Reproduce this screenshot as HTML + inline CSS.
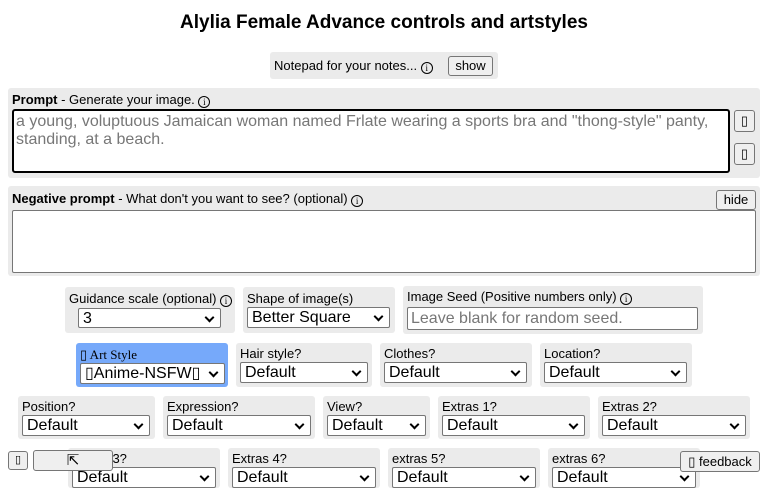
<!DOCTYPE html>
<html><head><meta charset="utf-8"><style>
*{box-sizing:border-box;margin:0;padding:0}
body{width:768px;height:480px;overflow:hidden;background:#fff;font-family:"Liberation Sans",Arial,sans-serif;color:#000;position:relative}
.a{position:absolute}
.box{position:absolute;background:#ebebeb;border-radius:3px}
.lbl{position:absolute;font-size:13px;white-space:nowrap;line-height:15px}
.i{display:inline-block;width:12px;height:12px;border:1.3px solid #000;border-radius:50%;font-size:9px;line-height:10px;text-align:center;vertical-align:-1px;font-family:"Liberation Serif",serif}
.sel{position:absolute;background:#fff;border:1px solid #767676;border-radius:2px;font-size:16px;line-height:20px;padding-left:4px;white-space:nowrap;overflow:hidden}
.sel:after{content:"";position:absolute;right:7px;top:5px;width:5px;height:5px;border-right:2px solid #000;border-bottom:2px solid #000;transform:rotate(45deg)}
.btn{position:absolute;background:#efefef;border:1px solid #767676;border-radius:3px;font-size:13px;text-align:center}
</style></head><body>
<div class="a" style="left:0;top:12px;width:768px;text-align:center;font-size:19px;font-weight:bold">Alylia Female Advance controls and artstyles</div>

<div class="box" style="left:270px;top:52px;width:228px;height:27px"></div>
<div class="lbl" style="left:274px;top:58px">Notepad for your notes... <span class="i">i</span></div>
<div class="btn" style="left:448px;top:56px;width:45px;height:20px;line-height:18px">show</div>

<div class="box" style="left:8px;top:88px;width:752px;height:90px"></div>
<div class="lbl" style="left:12px;top:92px"><b>Prompt</b> - Generate your image. <span class="i">i</span></div>
<div class="a" style="left:12px;top:109px;width:718px;height:64px;border:2px solid #000;border-radius:3px;background:#fff;font-size:16px;color:#777;padding:2px 2px;line-height:18px">a young, voluptuous Jamaican woman named Frlate wearing a sports bra and "thong-style" panty, standing, at a beach.</div>
<div class="btn" style="left:734px;top:110px;width:21px;height:22px;line-height:20px">▯</div>
<div class="btn" style="left:734px;top:143px;width:21px;height:22px;line-height:20px">▯</div>

<div class="box" style="left:8px;top:186px;width:752px;height:90px"></div>
<div class="lbl" style="left:12px;top:191px"><b>Negative prompt</b> - What don't you want to see? (optional) <span class="i">i</span></div>
<div class="btn" style="left:716px;top:190px;width:40px;height:20px;line-height:18px">hide</div>
<div class="a" style="left:12px;top:210px;width:744px;height:63px;border:1px solid #767676;border-radius:2px;background:#fff"></div>

<div class="box" style="left:65px;top:287px;width:170px;height:46px"></div>
<div class="lbl" style="left:69px;top:291px">Guidance scale (optional) <span class="i">i</span></div>
<div class="sel" style="left:78px;top:308px;width:143px;height:20px;line-height:19px">3</div>
<div class="box" style="left:243px;top:287px;width:152px;height:46px"></div>
<div class="lbl" style="left:247px;top:291px">Shape of image(s)</div>
<div class="sel" style="left:247px;top:307px;width:143px;height:21px">Better Square</div>
<div class="box" style="left:403px;top:286px;width:300px;height:48px"></div>
<div class="lbl" style="left:407px;top:289px">Image Seed (Positive numbers only) <span class="i">i</span></div>
<div class="a" style="left:407px;top:307px;width:291px;height:23px;border:1px solid #767676;border-radius:2px;background:#fff;font-size:16px;color:#777;padding:2px 3px">Leave blank for random seed.</div>

<div class="box" style="left:76px;top:343px;width:152px;height:44px;background:#76a9fa"></div>
<div class="lbl" style="left:80px;top:347px;font-family:'Liberation Serif',serif">▯ Art Style</div>
<div class="sel" style="left:80px;top:363px;width:145px;height:21px">▯Anime-NSFW▯</div>
<div class="box" style="left:236px;top:343px;width:136px;height:44px"></div>
<div class="lbl" style="left:240px;top:346px">Hair style?</div>
<div class="sel" style="left:240px;top:362px;width:128px;height:21px">Default</div>
<div class="box" style="left:380px;top:343px;width:152px;height:44px"></div>
<div class="lbl" style="left:384px;top:346px">Clothes?</div>
<div class="sel" style="left:384px;top:362px;width:143px;height:21px">Default</div>
<div class="box" style="left:540px;top:343px;width:152px;height:44px"></div>
<div class="lbl" style="left:544px;top:346px">Location?</div>
<div class="sel" style="left:544px;top:362px;width:143px;height:21px">Default</div>

<div class="box" style="left:18px;top:396px;width:137px;height:43px"></div>
<div class="lbl" style="left:22px;top:399px">Position?</div>
<div class="sel" style="left:22px;top:415px;width:128px;height:21px">Default</div>
<div class="box" style="left:163px;top:396px;width:152px;height:43px"></div>
<div class="lbl" style="left:167px;top:399px">Expression?</div>
<div class="sel" style="left:167px;top:415px;width:144px;height:21px">Default</div>
<div class="box" style="left:323px;top:396px;width:107px;height:43px"></div>
<div class="lbl" style="left:327px;top:399px">View?</div>
<div class="sel" style="left:327px;top:415px;width:99px;height:21px">Default</div>
<div class="box" style="left:438px;top:396px;width:152px;height:43px"></div>
<div class="lbl" style="left:442px;top:399px">Extras 1?</div>
<div class="sel" style="left:442px;top:415px;width:143px;height:21px">Default</div>
<div class="box" style="left:598px;top:396px;width:152px;height:43px"></div>
<div class="lbl" style="left:602px;top:399px">Extras 2?</div>
<div class="sel" style="left:602px;top:415px;width:144px;height:21px">Default</div>

<div class="box" style="left:68px;top:448px;width:152px;height:40px"></div>
<div class="lbl" style="left:72px;top:451px">Extras 3?</div>
<div class="sel" style="left:72px;top:467px;width:144px;height:21px">Default</div>
<div class="box" style="left:228px;top:448px;width:152px;height:40px"></div>
<div class="lbl" style="left:232px;top:451px">Extras 4?</div>
<div class="sel" style="left:232px;top:467px;width:144px;height:21px">Default</div>
<div class="box" style="left:388px;top:448px;width:152px;height:40px"></div>
<div class="lbl" style="left:392px;top:451px">extras 5?</div>
<div class="sel" style="left:392px;top:467px;width:144px;height:21px">Default</div>
<div class="box" style="left:548px;top:448px;width:152px;height:40px"></div>
<div class="lbl" style="left:552px;top:451px">extras 6?</div>
<div class="sel" style="left:552px;top:467px;width:144px;height:21px">Default</div>

<div class="btn" style="left:8px;top:451px;width:20px;height:19px;line-height:17px;font-size:11px">▯</div>
<div class="btn" style="left:33px;top:450px;width:80px;height:21px;line-height:19px;font-size:15px">⇱</div>
<div class="btn" style="left:680px;top:451px;width:80px;height:21px;line-height:19px">▯ feedback</div>
</body></html>
